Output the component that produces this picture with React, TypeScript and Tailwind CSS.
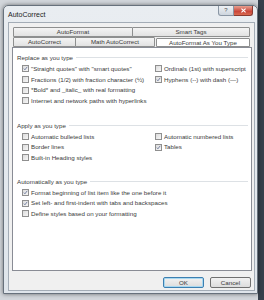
import React from "react";

type Item = { label: string; checked?: boolean };

const Check = ({ checked }: { checked?: boolean }) => (
  <span className="flex h-[7px] w-[7px] shrink-0 items-center justify-center border border-[#8f8f8f] bg-[linear-gradient(135deg,#dcdcdc,#f6f6f6)]">
    {checked ? (
      <svg viewBox="0 0 7 7" className="h-[7px] w-[7px]" aria-hidden="true">
        <path d="M1.2 3.6 2.7 5.3 5.9 1.2" fill="none" stroke="#4a5a86" strokeWidth="1" />
      </svg>
    ) : null}
  </span>
);

const Row = ({ label, checked }: Item) => (
  <div className="flex h-[10.7px] items-center gap-[2px] whitespace-nowrap">
    <Check checked={checked} />
    <span>{label}</span>
  </div>
);

const Group = ({ title, left, right, className }: { title: string; left: Item[]; right?: Item[]; className?: string }) => (
  <div className={className}>
    <div className="flex h-[10.7px] items-center gap-[3px] pl-[4px] pr-[3px]">
      <span className="whitespace-nowrap">{title}</span>
      <span className="h-px flex-1 bg-[#dde1e5]" />
    </div>
    <div className="grid grid-cols-[133px_1fr] pl-[9px]">
      <div>
        {left.map((item) => (
          <Row key={item.label} {...item} />
        ))}
      </div>
      <div>
        {right?.map((item) => (
          <Row key={item.label} {...item} />
        ))}
      </div>
    </div>
  </div>
);

const Tab = ({ label, width, active }: { label: string; width: string; active?: boolean }) => (
  <div
    className={`flex items-center justify-center border border-[#8e8f8f] ${width} ${
      active ? "mt-[1px] bg-white" : "-ml-px bg-[linear-gradient(#f4f4f4,#e2e2e2)] first:ml-0"
    } rounded-t-[1px]`}
  >
    {label}
  </div>
);

export default function App() {
  return (
    <div className="h-[300px] w-[264px] overflow-hidden bg-[linear-gradient(to_right,#d2d6db_0,#d2d6db_258px,#36404c_258px)] pl-[3px] pt-[5px] font-['Liberation_Sans',Arial,sans-serif] text-[6.2px] text-[#3a3a3a]">
      <div className="flex h-[289px] w-[255px] flex-col rounded-t-[5px] border border-[#67717c] bg-[linear-gradient(#e9edf1,#dfe5eb)] shadow-[0_0_4px_rgba(0,0,0,0.5)]">
        <div className="flex h-[16px] items-start">
          <span className="pl-[4px] pt-[4px] text-[7px] text-[#222]">AutoCorrect</span>
          <div className="ml-auto mr-[4px] flex">
            <div className="flex h-[10px] w-[16px] items-center justify-center rounded-bl-[3px] border border-t-0 border-[#8a96a4] bg-[linear-gradient(#eef1f4,#cdd5de)] text-[6px] text-[#555]">
              ?
            </div>
            <div className="flex h-[10px] w-[19px] items-center justify-center rounded-br-[3px] border border-l-0 border-t-0 border-[#8a3a30] bg-[linear-gradient(#e8a090,#c9463a_60%,#d96a50)]">
              <svg viewBox="0 0 8 6" className="h-[5px] w-[7px]" aria-hidden="true">
                <path d="M1.5 0.8 6.5 5.2M6.5 0.8 1.5 5.2" stroke="#fff" strokeWidth="1.4" />
              </svg>
            </div>
          </div>
        </div>

        <div className="mb-[2px] ml-[4px] mr-[2px] flex flex-1 flex-col border border-[#a3acb6] bg-[#f0f0f0] pl-[3px] pr-[1px] pt-[4px]">
          <div className="ml-[1px] flex h-[10px] w-[237px]">
            <Tab label="AutoFormat" width="w-[120px]" />
            <Tab label="Smart Tags" width="w-[118px]" />
          </div>
          <div className="ml-[1px] flex h-[10px] w-[237px]">
            <Tab label="AutoCorrect" width="w-[63px]" />
            <Tab label="Math AutoCorrect" width="w-[80px]" />
            <Tab label="AutoFormat As You Type" width="ml-[1px] w-[94px]" active />
          </div>

          <div className="h-[224px] w-[240px] border border-[#898c95] bg-white pt-[4.6px]">
            <Group
              title="Replace as you type"
              left={[
                { label: '"Straight quotes" with "smart quotes"', checked: true },
                { label: "Fractions (1/2) with fraction character (½)" },
                { label: "*Bold* and _italic_ with real formatting" },
                { label: "Internet and network paths with hyperlinks" },
              ]}
              right={[
                { label: "Ordinals (1st) with superscript" },
                { label: "Hyphens (--) with dash (—)", checked: true },
              ]}
            />
            <Group
              className="mt-[14.3px]"
              title="Apply as you type"
              left={[
                { label: "Automatic bulleted lists" },
                { label: "Border lines" },
                { label: "Built-in Heading styles" },
              ]}
              right={[
                { label: "Automatic numbered lists" },
                { label: "Tables", checked: true },
              ]}
            />
            <Group
              className="mt-[13.3px]"
              title="Automatically as you type"
              left={[
                { label: "Format beginning of list item like the one before it", checked: true },
                { label: "Set left- and first-indent with tabs and backspaces", checked: true },
                { label: "Define styles based on your formatting" },
              ]}
            />
          </div>

          <div className="mt-[6px] flex w-[239px] justify-end gap-[6px]">
            <button className="flex h-[11px] w-[41px] items-center justify-center rounded-[2px] border border-[#3c7fb1] bg-[linear-gradient(#f2f2f2,#dcdcdc)] shadow-[inset_0_0_0_1px_#a8d8f0]">
              OK
            </button>
            <button className="flex h-[11px] w-[41px] items-center justify-center rounded-[2px] border border-[#707070] bg-[linear-gradient(#f2f2f2,#dcdcdc)]">
              Cancel
            </button>
          </div>
        </div>
      </div>
    </div>
  );
}
